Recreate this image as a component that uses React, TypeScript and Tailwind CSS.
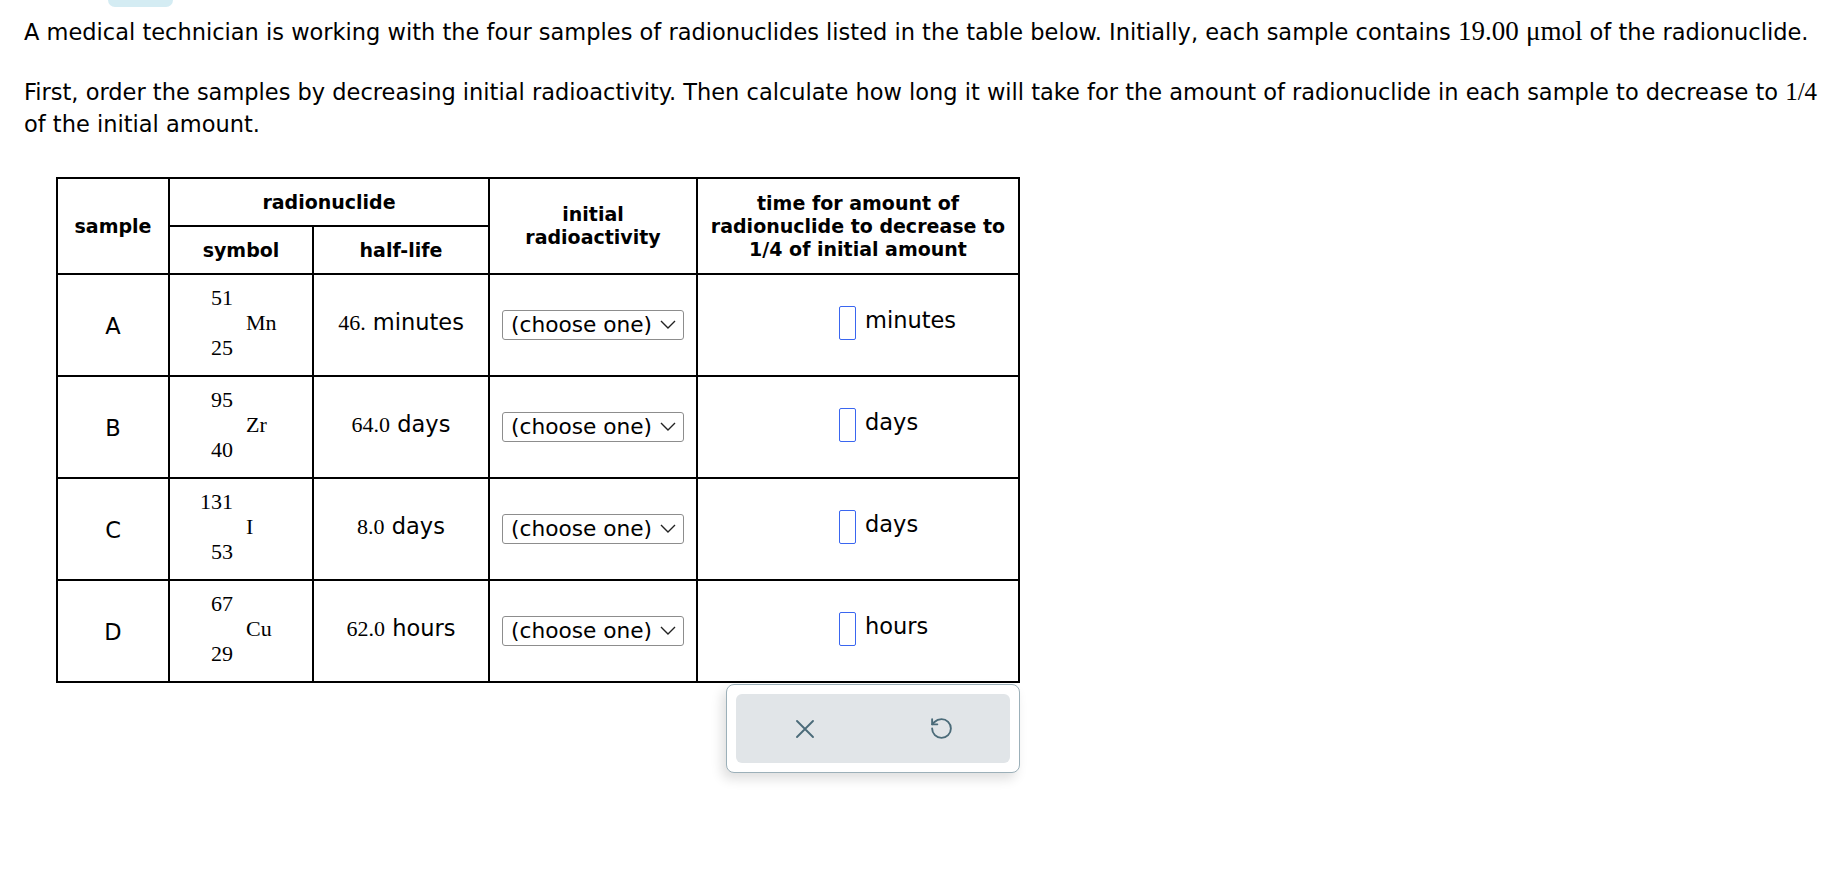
import React from "react";
import { RotateCcw } from "lucide-react";

const sans = "font-['DejaVu_Sans',Verdana,sans-serif]";
const serif = "font-['Liberation_Serif','Times_New_Roman',serif]";

const rows = [
  { sample: "A", mass: "51", z: "25", el: "Mn", half: "46.", unit: "minutes" },
  { sample: "B", mass: "95", z: "40", el: "Zr", half: "64.0", unit: "days" },
  { sample: "C", mass: "131", z: "53", el: "I", half: "8.0", unit: "days" },
  { sample: "D", mass: "67", z: "29", el: "Cu", half: "62.0", unit: "hours" },
];

// isotope notation: mass number over atomic number, element symbol in between
const Nuclide = ({ mass, z, el }: { mass: string; z: string; el: string }) => (
  <div className={`-mt-[6px] grid grid-cols-[63px_auto] grid-rows-3 gap-x-[13px] text-[22px] leading-[25px] ${serif}`}>
    <span className="text-right">{mass}</span>
    <span />
    <span />
    <span className="text-left">{el}</span>
    <span className="text-right">{z}</span>
    <span />
  </div>
);

const ChooseOne = () => (
  <div className="inline-flex items-center justify-between h-[30px] w-[182px] border border-[#8d8d8d] rounded-[3px] pl-[8px] pr-[6px] bg-white text-[21.7px] leading-none text-black">
    <span>(choose one)</span>
    <svg width="18" height="11" viewBox="0 0 18 11" fill="none" stroke="#222" strokeWidth="1.4">
      <path d="M2 2 L9 9 L16 2" />
    </svg>
  </div>
);

export default function App() {
  return (
    <div className={`min-h-screen bg-white text-black ${sans} pl-[24px] pr-[10px]`}>
      <div className="ml-[84px] h-[7px] w-[65px] rounded-b-[10px] bg-[#d4ecf3]" />

      <p className="mt-[8px] text-[22.5px] leading-[32px] whitespace-nowrap">
        A medical technician is working with the four samples of radionuclides listed in the table below. Initially, each sample contains{" "}
        <span className={`${serif} text-[27px]`}>19.00</span> <span className={`${serif} text-[27px]`}>μmol</span> of the radionuclide.
      </p>

      <p className="mt-[28px] text-[22.5px] leading-[32px]">
        <span className="whitespace-nowrap">
          First, order the samples by decreasing initial radioactivity. Then calculate how long it will take for the amount of radionuclide in each sample to decrease to{" "}
          <span className={`${serif} text-[25px]`}>1/4</span>
        </span>
        <br />
        of the initial amount.
      </p>

      <table className="ml-[32px] mt-[37px] border-collapse table-fixed w-[962px] border-2 border-black">
        <colgroup>
          <col className="w-[112px]" />
          <col className="w-[144px]" />
          <col className="w-[176px]" />
          <col className="w-[208px]" />
          <col className="w-[322px]" />
        </colgroup>
        <thead className="text-[19px] font-bold leading-[23px]">
          <tr className="h-[48px]">
            <th rowSpan={2} className="border-2 border-black align-middle">sample</th>
            <th colSpan={2} className="border-2 border-black align-middle">radionuclide</th>
            <th rowSpan={2} className="border-2 border-black align-middle">
              initial
              <br />
              radioactivity
            </th>
            <th rowSpan={2} className="border-2 border-black align-middle">
              time for amount of
              <br />
              radionuclide to decrease to
              <br />
              1/4 of initial amount
            </th>
          </tr>
          <tr className="h-[48px]">
            <th className="border-2 border-black align-middle">symbol</th>
            <th className="border-2 border-black align-middle">half-life</th>
          </tr>
        </thead>
        <tbody className="text-[22.5px]">
          {rows.map((r) => (
            <tr key={r.sample} className="h-[102px]">
              <td className="border-2 border-black text-center align-middle pt-[4px]">{r.sample}</td>
              <td className="border-2 border-black align-middle p-0">
                <Nuclide mass={r.mass} z={r.z} el={r.el} />
              </td>
              <td className="border-2 border-black text-center align-middle pb-[4px]">
                <span className={`${serif} text-[22px]`}>{r.half}</span> {r.unit}
              </td>
              <td className="border-2 border-black align-middle pl-[12px]">
                <ChooseOne />
              </td>
              <td className="border-2 border-black align-middle pl-[141px]">
                <div className="-mt-[5px] flex items-center gap-[9px]">
                  <span className="inline-block h-[34px] w-[17px] rounded-[2px] border-[1.5px] border-[#3a66f0]" />
                  <span className="-mt-[3px]">{r.unit}</span>
                </div>
              </td>
            </tr>
          ))}
        </tbody>
      </table>

      <div className="ml-[32px] flex w-[964px] justify-end">
        <div className="mt-[1px] h-[89px] w-[294px] rounded-[8px] border border-[#9cb0b9] bg-white p-[9px] shadow-[-4px_6px_12px_rgba(0,0,0,0.13)]">
          <div className="flex h-full rounded-[6px] bg-[#e1e5e8]">
            <button className="flex flex-1 items-center justify-center">
              <svg width="20" height="20" viewBox="0 0 20 20" fill="none" stroke="#4b6b79" strokeWidth="1.9" strokeLinecap="round">
                <path d="M2 2 L18 18 M18 2 L2 18" />
              </svg>
            </button>
            <button className="flex flex-1 items-center justify-center">
              <RotateCcw size={25} strokeWidth={1.8} color="#4b6b79" />
            </button>
          </div>
        </div>
      </div>
    </div>
  );
}
